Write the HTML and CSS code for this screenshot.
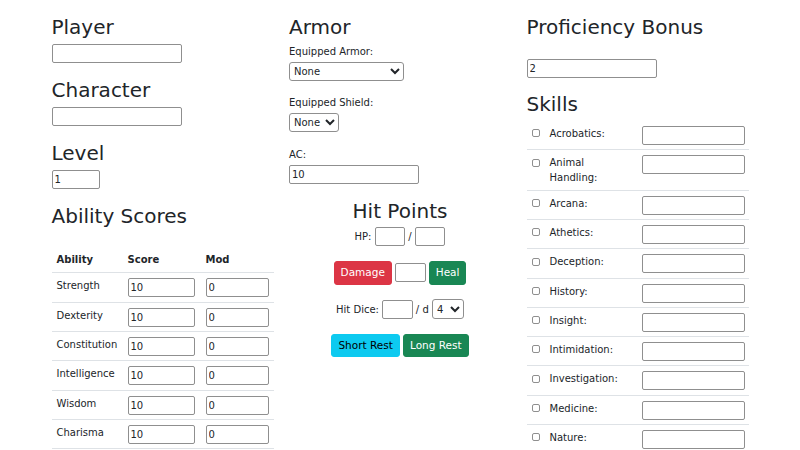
FILE: index.html
```html
<!DOCTYPE html>
<html lang="en">
<head>
    <meta charset="UTF-8">
    <meta name="viewport" content="width=device-width, initial-scale=1.0">
    <title>Character Sheet</title>
    <link rel="stylesheet" href="styles.css">
</head>
<body>
    <div class="sheet">
        <div class="column">
            <div class="entry">
                <h2 class="title">Player</h2>
                <input type="text" class="box wide" id="player">
            </div>
            <div class="entry">
                <h2 class="title">Character</h2>
                <input type="text" class="box wide" id="character">
            </div>
            <div class="entry">
                <h2 class="title">Level</h2>
                <input type="text" class="box short" id="level" value="1">
            </div>
            <h2 class="title">Ability Scores</h2>
            <table class="grid abilities">
                <colgroup>
                    <col class="c-name">
                    <col class="c-score">
                    <col class="c-mod">
                </colgroup>
                <thead>
                    <tr><th>Ability</th><th>Score</th><th>Mod</th></tr>
                </thead>
                <tbody>
                    <tr><td>Strength</td><td><input type="text" class="box score" value="10"></td><td><input type="text" class="box mod" value="0"></td></tr>
                    <tr><td>Dexterity</td><td><input type="text" class="box score" value="10"></td><td><input type="text" class="box mod" value="0"></td></tr>
                    <tr><td>Constitution</td><td><input type="text" class="box score" value="10"></td><td><input type="text" class="box mod" value="0"></td></tr>
                    <tr><td>Intelligence</td><td><input type="text" class="box score" value="10"></td><td><input type="text" class="box mod" value="0"></td></tr>
                    <tr><td>Wisdom</td><td><input type="text" class="box score" value="10"></td><td><input type="text" class="box mod" value="0"></td></tr>
                    <tr><td>Charisma</td><td><input type="text" class="box score" value="10"></td><td><input type="text" class="box mod" value="0"></td></tr>
                </tbody>
            </table>
        </div>

        <div class="column">
            <h2 class="title">Armor</h2>
            <div class="field">
                <label for="armor">Equipped Armor:</label>
                <select id="armor" class="pick armor">
                    <option>None</option>
                    <option>Padded</option>
                    <option>Leather</option>
                    <option>Studded Leather</option>
                    <option>Hide</option>
                    <option>Chain Shirt</option>
                    <option>Scale Mail</option>
                    <option>Breastplate</option>
                    <option>Half Plate</option>
                    <option>Ring Mail</option>
                    <option>Chain Mail</option>
                    <option>Splint</option>
                    <option>Plate</option>
                </select>
            </div>
            <div class="field">
                <label for="shield">Equipped Shield:</label>
                <select id="shield" class="pick shield">
                    <option>None</option>
                    <option>Shield</option>
                </select>
            </div>
            <div class="field">
                <label for="ac">AC:</label>
                <input type="text" class="box wide" id="ac" value="10">
            </div>

            <div class="hp">
                <h2 class="title">Hit Points</h2>
                <div class="hp-row">
                    <span>HP:</span>
                    <input type="text" class="box tiny" id="hp-current">
                    <span>/</span>
                    <input type="text" class="box tiny" id="hp-max">
                </div>
                <div class="hp-row">
                    <button class="btn btn-red" id="damage-btn">Damage</button>
                    <input type="text" class="box tiny" id="hp-change">
                    <button class="btn btn-green" id="heal-btn">Heal</button>
                </div>
                <div class="hp-row">
                    <span>Hit Dice:</span>
                    <input type="text" class="box tiny" id="hit-dice">
                    <span>/ d</span>
                    <select id="die" class="pick die">
                        <option>4</option>
                        <option>6</option>
                        <option>8</option>
                        <option>10</option>
                        <option>12</option>
                    </select>
                </div>
                <div class="hp-row">
                    <button class="btn btn-cyan" id="short-rest">Short Rest</button>
                    <button class="btn btn-green" id="long-rest">Long Rest</button>
                </div>
            </div>
        </div>

        <div class="column">
            <div class="entry prof">
                <h2 class="title">Proficiency Bonus</h2>
                <input type="text" class="box wide" id="prof" value="2">
            </div>
            <h2 class="title">Skills</h2>
            <table class="grid skills">
                <colgroup>
                    <col class="c-chk">
                    <col class="c-skill">
                    <col class="c-val">
                </colgroup>
                <tbody>
                    <tr><td><input type="checkbox" class="tick"></td><td>Acrobatics:</td><td><input type="text" class="box skill"></td></tr>
                    <tr><td><input type="checkbox" class="tick"></td><td>Animal Handling:</td><td><input type="text" class="box skill"></td></tr>
                    <tr><td><input type="checkbox" class="tick"></td><td>Arcana:</td><td><input type="text" class="box skill"></td></tr>
                    <tr><td><input type="checkbox" class="tick"></td><td>Athetics:</td><td><input type="text" class="box skill"></td></tr>
                    <tr><td><input type="checkbox" class="tick"></td><td>Deception:</td><td><input type="text" class="box skill"></td></tr>
                    <tr><td><input type="checkbox" class="tick"></td><td>History:</td><td><input type="text" class="box skill"></td></tr>
                    <tr><td><input type="checkbox" class="tick"></td><td>Insight:</td><td><input type="text" class="box skill"></td></tr>
                    <tr><td><input type="checkbox" class="tick"></td><td>Intimidation:</td><td><input type="text" class="box skill"></td></tr>
                    <tr><td><input type="checkbox" class="tick"></td><td>Investigation:</td><td><input type="text" class="box skill"></td></tr>
                    <tr><td><input type="checkbox" class="tick"></td><td>Medicine:</td><td><input type="text" class="box skill"></td></tr>
                    <tr><td><input type="checkbox" class="tick"></td><td>Nature:</td><td><input type="text" class="box skill"></td></tr>
                    <tr><td><input type="checkbox" class="tick"></td><td>Perception:</td><td><input type="text" class="box skill"></td></tr>
                    <tr><td><input type="checkbox" class="tick"></td><td>Performance:</td><td><input type="text" class="box skill"></td></tr>
                    <tr><td><input type="checkbox" class="tick"></td><td>Persuasion:</td><td><input type="text" class="box skill"></td></tr>
                    <tr><td><input type="checkbox" class="tick"></td><td>Religion:</td><td><input type="text" class="box skill"></td></tr>
                    <tr><td><input type="checkbox" class="tick"></td><td>Sleight of Hand:</td><td><input type="text" class="box skill"></td></tr>
                    <tr><td><input type="checkbox" class="tick"></td><td>Stealth:</td><td><input type="text" class="box skill"></td></tr>
                    <tr><td><input type="checkbox" class="tick"></td><td>Survival:</td><td><input type="text" class="box skill"></td></tr>
                </tbody>
            </table>
        </div>
    </div>
</body>
</html>
```

FILE: styles.css
```css
body {
    margin: 0;
    font-family: "DejaVu Sans", sans-serif;
    font-size: 10px;
    line-height: 15px;
    color: #212529;
    background: #fff;
}
.sheet {
    width: 697px;
    margin: 0 auto;
    padding-top: 15px;
    display: grid;
    grid-template-columns: repeat(3, 222px);
    column-gap: 15.5px;
    align-items: start;
}
.title {
    font-size: 20px;
    line-height: 24px;
    font-weight: 400;
    margin: 0 0 4.7px;
}
.entry {
    margin-bottom: 15.3px;
}
/* block inputs collapse margins with the heading above */
.prof .box {
    margin-top: 20px;
}
.prof {
    margin-bottom: 14.4px;
}
.box {
    display: block;
    box-sizing: border-box;
    height: 19px;
    border: 1px solid #8f8f8f;
    border-radius: 2px;
    padding: 0 2px;
    font-family: "DejaVu Sans", sans-serif;
    font-size: 10px;
    color: #212529;
    background: #fff;
}
.wide { width: 130px; }
.short { width: 48px; }
.score { width: 67px; }
.mod { width: 63px; }
.skill { width: 103px; }
.tiny { width: 30.5px; }

.field {
    margin-bottom: 14.7px;
}
.field label {
    display: block;
    margin-bottom: 3px;
}
.pick {
    display: block;
    box-sizing: border-box;
    height: 19px;
    border: 1px solid #8f8f8f;
    border-radius: 3px;
    padding: 0;
    font-family: "DejaVu Sans", sans-serif;
    font-size: 10px;
    color: #212529;
    background: #fff;
}
.armor { width: 115px; }
.shield { width: 50px; }
.die { width: 32px; height: 20px; }

.grid {
    width: 222px;
    border-collapse: collapse;
    table-layout: fixed;
}
.grid th,
.grid td {
    padding: 5px 5px 4.3px;
    text-align: left;
    vertical-align: top;
    border-bottom: 1px solid #dee2e6;
}
.grid th {
    font-weight: 700;
    padding-top: 5.5px;
    padding-bottom: 5.5px;
    vertical-align: bottom;
}
.abilities {
    margin-top: 18.5px;
}
.c-name { width: 71px; }
.c-score { width: 78px; }
.c-mod { width: 73px; }
.c-chk { width: 18px; }
.c-skill { width: 92px; }
.c-val { width: 112px; }
.skills td:first-child {
    padding-left: 5.5px;
    padding-right: 0;
}
.tick {
    appearance: none;
    display: block;
    width: 8px;
    height: 8px;
    margin: 3.3px 0 0;
    border: 1px solid #8f8f8f;
    border-radius: 2px;
    background: #fff;
    box-sizing: border-box;
}

.hp {
    text-align: center;
}
.hp-row {
    display: flex;
    justify-content: center;
    align-items: center;
    gap: 3.2px;
    margin-bottom: 14.8px;
}
.btn {
    font-family: "DejaVu Sans", sans-serif;
    font-size: 10.5px;
    line-height: 15.3px;
    padding: 3px 6px;
    border: 1px solid transparent;
    border-radius: 3px;
    color: #fff;
    cursor: pointer;
}
.btn-red {
    background-color: #dc3545;
    border-color: #dc3545;
}
.btn-green {
    background-color: #198754;
    border-color: #198754;
}
.btn-cyan {
    background-color: #0dcaf0;
    border-color: #0dcaf0;
    color: #000;
}
```
